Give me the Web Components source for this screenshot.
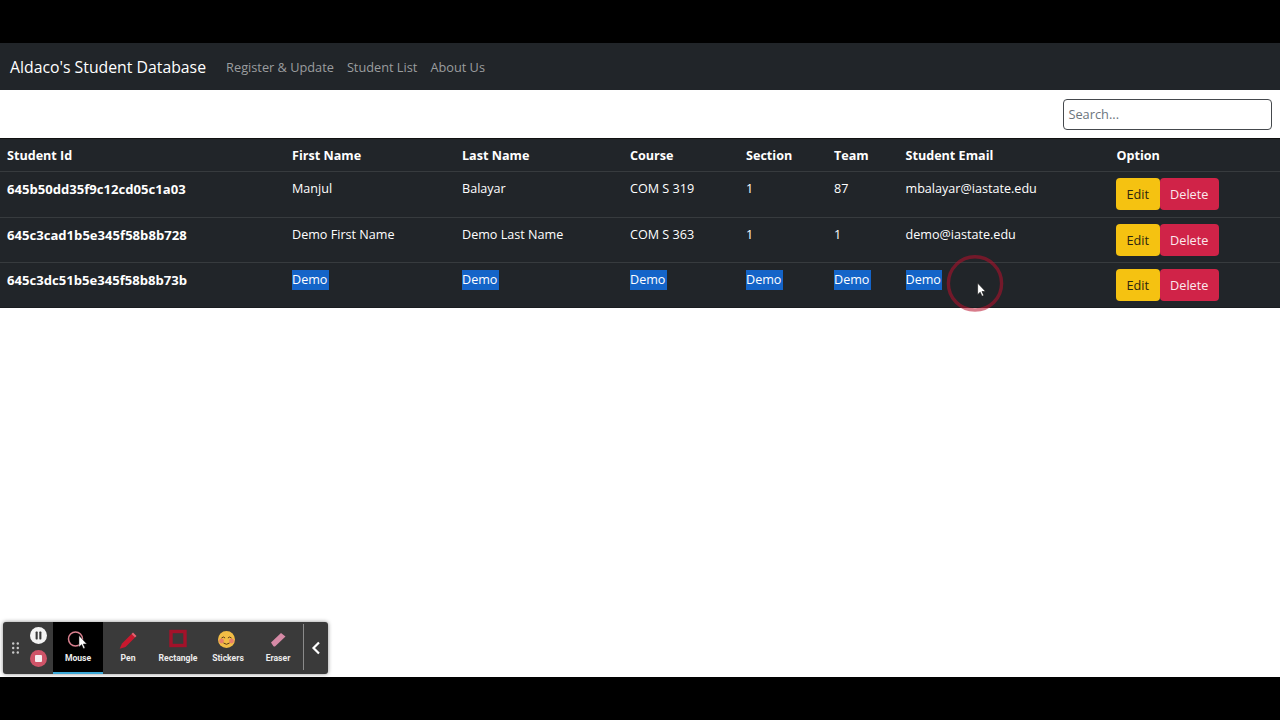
<!DOCTYPE html>
<html lang="en">
<head>
<meta charset="utf-8">
<title>Aldaco's Student Database</title>
<style>
  html, body { margin: 0; padding: 0; background: #000; }
  body { font-family: "Open Sans", "Noto Sans", sans-serif; }
</style>
</head>
<body>
<app-frame>
  <nav-bar brand="Aldaco's Student Database">
    <nav-link>Register &amp; Update</nav-link>
    <nav-link>Student List</nav-link>
    <nav-link>About Us</nav-link>
  </nav-bar>
  <search-bar></search-bar>
  <student-table>
    <student-row header student-id="Student Id" first="First Name" last="Last Name" course="Course" section="Section" team="Team" email="Student Email"></student-row>
    <student-row student-id="645b50dd35f9c12cd05c1a03" first="Manjul" last="Balayar" course="COM S 319" section="1" team="87" email="mbalayar@iastate.edu"></student-row>
    <student-row student-id="645c3cad1b5e345f58b8b728" first="Demo First Name" last="Demo Last Name" course="COM S 363" section="1" team="1" email="demo@iastate.edu"></student-row>
    <student-row selected student-id="645c3dc51b5e345f58b8b73b" first="Demo" last="Demo" course="Demo" section="Demo" team="Demo" email="Demo"></student-row>
  </student-table>
  <click-ring></click-ring>
  <record-toolbar></record-toolbar>
</app-frame>

<script>
  'use strict';

  class AppFrame extends HTMLElement {
    constructor () {
      super();
      this.attachShadow({mode: 'open'});
      this.shadowRoot.innerHTML = `
        <style>
          :host {
            display: block;
            position: relative;
            width: 1280px;
            height: 720px;
            overflow: hidden;
            background: #000;
            padding: 43px 0;
            box-sizing: border-box;
          }
          .screen {
            height: 634px;
            background: #fff;
          }
        </style>
        <div class="screen"><slot></slot></div>
      `;
    }
  }

  class NavBar extends HTMLElement {
    constructor () {
      super();
      this.attachShadow({mode: 'open'});
      this.shadowRoot.innerHTML = `
        <style>
          :host {
            display: flex;
            align-items: center;
            height: 47px;
            box-sizing: border-box;
            padding-left: 10px;
            background: #212529;
          }
          .brand {
            font-size: 15.8px;
            color: #fff;
            margin-right: 13.5px;
            white-space: nowrap;
          }
        </style>
        <span class="brand"></span>
        <slot></slot>
      `;
      this.shadowRoot.querySelector('.brand').textContent = this.getAttribute('brand');
    }
  }

  class NavLink extends HTMLElement {
    constructor () {
      super();
      this.attachShadow({mode: 'open'});
      this.shadowRoot.innerHTML = `
        <style>
          :host {
            display: block;
            padding: 0 6.5px;
            font-size: 12.75px;
            color: #9b9d9f;
            white-space: nowrap;
          }
          :host(:first-child) {
            padding-left: 6.6px;
          }
        </style>
        <slot></slot>
      `;
    }
  }

  class SearchBar extends HTMLElement {
    constructor () {
      super();
      this.attachShadow({mode: 'open'});
      this.shadowRoot.innerHTML = `
        <style>
          :host {
            display: flex;
            justify-content: flex-end;
            align-items: center;
            height: 48px;
            padding-right: 8px;
            box-sizing: border-box;
          }
          .field {
            width: 209px;
            height: 31px;
            box-sizing: border-box;
            border: 1.6px solid #45494d;
            border-radius: 4px;
            padding: 0 4.4px;
            font: 12.8px "Open Sans", "Noto Sans", sans-serif;
            line-height: 28.5px;
            color: #6c757d;
            background: #fff;
          }
        </style>
        <div class="field">Search...</div>
      `;
    }
  }

  class StudentTable extends HTMLElement {
    constructor () {
      super();
      this.attachShadow({mode: 'open'});
      this.shadowRoot.innerHTML = `
        <style>
          :host {
            display: block;
            background: #212529;
            border-top: 1px solid #111;
          }
        </style>
        <slot></slot>
      `;
    }
  }

  class StudentRow extends HTMLElement {
    constructor () {
      super();
      this.attachShadow({mode: 'open'});
      const isHeader = this.hasAttribute('header');
      const selected = this.hasAttribute('selected');
      const cell = name => {
        const text = this.getAttribute(name);
        return selected ? `<span class="sel">${text}</span>` : text;
      };
      const option = isHeader
        ? '<div class="cell head">Option</div>'
        : '<div class="cell actions"><action-button kind="edit">Edit</action-button><action-button kind="delete">Delete</action-button></div>';
      const cls = isHeader ? 'cell head' : 'cell';
      this.shadowRoot.innerHTML = `
        <style>
          :host {
            display: grid;
            grid-template-columns: 285px 170px 168px 116px 88px 71.5px 211px 1fr;
            height: 45.3px;
            box-sizing: border-box;
            border-bottom: 1px solid #373b3e;
            color: #fff;
            font-size: 12.6px;
            line-height: 20px;
          }
          :host([header]) {
            height: 33.4px;
          }
          :host([selected]) {
            border-bottom: 1px solid #1a1d20;
          }
          .cell {
            padding: 7px 0 0 7px;
            white-space: nowrap;
          }
          .head {
            font-weight: 700;
          }
          .id {
            font-weight: 700;
            font-size: 13.1px;
          }
          .actions {
            display: flex;
            align-items: flex-start;
            padding: 6px 0 0 6.5px;
          }
          .sel {
            display: inline-block;
            background: #1464c8;
            height: 20px;
            padding-right: 1.5px;
          }
        </style>
        <div class="cell ${isHeader ? 'head' : 'id'}">${this.getAttribute('student-id')}</div>
        <div class="${cls}">${cell('first')}</div>
        <div class="${cls}">${cell('last')}</div>
        <div class="${cls}">${cell('course')}</div>
        <div class="${cls}">${cell('section')}</div>
        <div class="${cls}">${cell('team')}</div>
        <div class="${cls}">${cell('email')}</div>
        ${option}
      `;
    }
  }

  class ActionButton extends HTMLElement {
    constructor () {
      super();
      this.attachShadow({mode: 'open'});
      this.shadowRoot.innerHTML = `
        <style>
          :host {
            display: block;
            height: 32px;
            box-sizing: border-box;
            padding: 0 10.5px;
            border-radius: 4px;
            font-size: 12.7px;
            line-height: 32px;
          }
          :host([kind="edit"]) {
            background: #f5c211;
            color: #2b2510;
          }
          :host([kind="delete"]) {
            background: #d02348;
            color: #fbe9ed;
          }
        </style>
        <slot></slot>
      `;
    }
  }

  class ClickRing extends HTMLElement {
    constructor () {
      super();
      this.attachShadow({mode: 'open'});
      this.shadowRoot.innerHTML = `
        <style>
          :host {
            position: absolute;
            left: 945px;
            top: 253px;
            width: 60px;
            height: 60px;
          }
          svg { display: block; }
        </style>
        <svg width="60" height="60" viewBox="0 0 60 60">
          <circle cx="30" cy="30.4" r="26.6" fill="none" stroke="#b8102c" stroke-opacity=".55" stroke-width="3.4"/>
          <path d="M30 29.5v11.6l2.6-2.5 1.8 4.1 1.8-.8-1.8-4h3.6z" transform="translate(2.6 .6)" fill="#fff" stroke="#111" stroke-width=".6"/>
        </svg>
      `;
    }
  }

  class ToolItem extends HTMLElement {
    constructor () {
      super();
      this.attachShadow({mode: 'open'});
      this.shadowRoot.innerHTML = `
        <style>
          :host {
            display: flex;
            flex-direction: column;
            align-items: center;
            box-sizing: border-box;
            width: 50px;
            height: 100%;
            padding-top: 6px;
            font: 700 8.6px Roboto, "Liberation Sans", sans-serif;
            color: #ececec;
          }
          :host([active]) {
            background: #000;
            box-shadow: inset 0 -2px 0 #3ba7d6;
          }
          .icon {
            width: 24px;
            height: 24px;
          }
          .label {
            line-height: 12px;
            white-space: nowrap;
          }
        </style>
        <div class="icon"><slot name="icon"></slot></div>
        <div class="label"></div>
      `;
      this.shadowRoot.querySelector('.label').textContent = this.getAttribute('label');
    }
  }

  class RecordToolbar extends HTMLElement {
    constructor () {
      super();
      this.attachShadow({mode: 'open'});
      this.shadowRoot.innerHTML = `
        <style>
          :host {
            position: absolute;
            left: 3px;
            top: 622px;
            width: 325px;
            height: 52px;
            display: flex;
            background: #3a3a3a;
            border-radius: 3px;
            box-shadow: 0 0 4px rgba(0, 0, 0, .45);
          }
          .grip {
            width: 25px;
            display: flex;
            align-items: center;
            justify-content: center;
          }
          .controls {
            width: 25px;
            display: flex;
            flex-direction: column;
            align-items: center;
            gap: 6px;
            padding: 4.5px 4px 0 0;
            box-sizing: border-box;
          }
          .tools {
            display: flex;
            height: 100%;
          }
          .divider {
            width: 1px;
            height: 46px;
            margin: 2px 0 0 0;
            background: #8a8a8a;
          }
          .collapse {
            flex: 1;
            display: flex;
            align-items: center;
            justify-content: center;
          }
          svg { display: block; }
        </style>
        <div class="grip">
          <svg width="7" height="12" viewBox="0 0 7 12" fill="#c9c9c9">
            <circle cx="1.2" cy="1.5" r="1.2"/><circle cx="5.8" cy="1.5" r="1.2"/>
            <circle cx="1.2" cy="6" r="1.2"/><circle cx="5.8" cy="6" r="1.2"/>
            <circle cx="1.2" cy="10.5" r="1.2"/><circle cx="5.8" cy="10.5" r="1.2"/>
          </svg>
        </div>
        <div class="controls">
          <svg width="17" height="17" viewBox="0 0 17 17">
            <circle cx="8.5" cy="8.5" r="8.5" fill="#f4f4f4"/>
            <rect x="5.6" y="4.6" width="2.1" height="7.8" rx=".6" fill="#3a3a3a"/>
            <rect x="9.3" y="4.6" width="2.1" height="7.8" rx=".6" fill="#3a3a3a"/>
          </svg>
          <svg width="17" height="17" viewBox="0 0 17 17">
            <circle cx="8.5" cy="8.5" r="8.5" fill="#cf5468"/>
            <rect x="5" y="5" width="7" height="7" rx="1" fill="#f6eef0"/>
          </svg>
        </div>
        <div class="tools">
          <tool-item label="Mouse" active>
            <svg slot="icon" width="24" height="24" viewBox="0 0 24 24">
              <circle cx="9.5" cy="11" r="7" fill="none" stroke="#d9808f" stroke-width="1.5"/>
              <path d="M13 7.5v11.5l2.6-2.4 1.8 4 1.6-.7-1.8-3.9h3.5z" fill="#fff" stroke="#222" stroke-width=".5"/>
            </svg>
          </tool-item>
          <tool-item label="Pen">
            <svg slot="icon" width="24" height="24" viewBox="0 0 24 24">
              <path d="M6 15.5 15.5 6l3.5 3.5L9.5 19l-5.8 1.8z" fill="#c9182e"/>
              <path d="M15.5 6l1.5-1.5 3.5 3.5L19 9.5z" fill="#e8606f"/>
            </svg>
          </tool-item>
          <tool-item label="Rectangle">
            <svg slot="icon" width="24" height="24" viewBox="0 0 24 24">
              <rect x="5" y="3.5" width="14" height="14" fill="none" stroke="#a3122a" stroke-width="3.4"/>
            </svg>
          </tool-item>
          <tool-item label="Stickers">
            <svg slot="icon" width="24" height="24" viewBox="0 0 24 24">
              <circle cx="10.5" cy="11.5" r="8.5" fill="#f2bd45"/>
              <circle cx="5.5" cy="13" r="2.4" fill="#e8806a"/>
              <circle cx="15.5" cy="13" r="2.4" fill="#e8806a"/>
              <path d="M5.5 10q2-2 3.6 0M11.9 10q1.6-2 3.6 0M7.5 15q3 2.6 6 0" fill="none" stroke="#5b3a1a" stroke-width="1"/>
            </svg>
          </tool-item>
          <tool-item label="Eraser">
            <svg slot="icon" width="24" height="24" viewBox="0 0 24 24">
              <path d="M5 14.5 15 5l4.5 3.6L9.5 18a1.6 1.6 0 0 1-2.2 0z" fill="#d68aa6"/>
            </svg>
          </tool-item>
        </div>
        <div class="divider"></div>
        <div class="collapse">
          <svg width="10" height="14" viewBox="0 0 10 14">
            <path d="M8 1.5 2.5 7 8 12.5" fill="none" stroke="#fff" stroke-width="2.2"/>
          </svg>
        </div>
      `;
    }
  }

  customElements.define('app-frame', AppFrame);
  customElements.define('nav-bar', NavBar);
  customElements.define('nav-link', NavLink);
  customElements.define('search-bar', SearchBar);
  customElements.define('student-table', StudentTable);
  customElements.define('student-row', StudentRow);
  customElements.define('action-button', ActionButton);
  customElements.define('click-ring', ClickRing);
  customElements.define('tool-item', ToolItem);
  customElements.define('record-toolbar', RecordToolbar);
</script>
</body>
</html>
